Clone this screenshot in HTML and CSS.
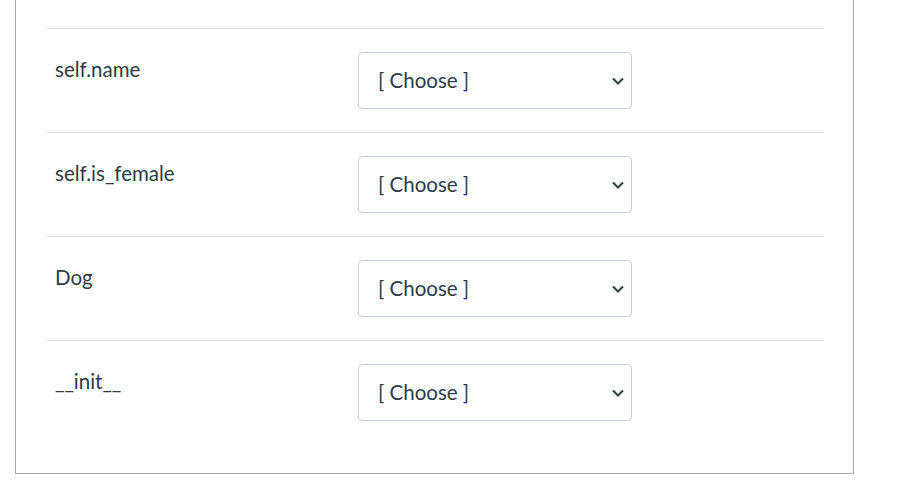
FILE: index.html
```html
<!DOCTYPE html>
<html lang="en">
<head>
  <meta charset="UTF-8">
  <title>Matching question</title>
  <link rel="stylesheet" href="styles.css">
</head>
<body>
  <div class="question">
    <div class="answer">
      <div class="answer-label">self.name</div>
      <div class="select-wrap">
        <select class="choose"><option>[ Choose ]</option></select>
        <svg class="chevron" width="12" height="8" viewBox="0 0 12 8"><path d="M1 1.5 L6 6.5 L11 1.5" fill="none" stroke="#2d3b45" stroke-width="2"/></svg>
      </div>
    </div>
    <div class="answer">
      <div class="answer-label">self.is_female</div>
      <div class="select-wrap">
        <select class="choose"><option>[ Choose ]</option></select>
        <svg class="chevron" width="12" height="8" viewBox="0 0 12 8"><path d="M1 1.5 L6 6.5 L11 1.5" fill="none" stroke="#2d3b45" stroke-width="2"/></svg>
      </div>
    </div>
    <div class="answer">
      <div class="answer-label">Dog</div>
      <div class="select-wrap">
        <select class="choose"><option>[ Choose ]</option></select>
        <svg class="chevron" width="12" height="8" viewBox="0 0 12 8"><path d="M1 1.5 L6 6.5 L11 1.5" fill="none" stroke="#2d3b45" stroke-width="2"/></svg>
      </div>
    </div>
    <div class="answer">
      <div class="answer-label">__init__</div>
      <div class="select-wrap">
        <select class="choose"><option>[ Choose ]</option></select>
        <svg class="chevron" width="12" height="8" viewBox="0 0 12 8"><path d="M1 1.5 L6 6.5 L11 1.5" fill="none" stroke="#2d3b45" stroke-width="2"/></svg>
      </div>
    </div>
  </div>
</body>
</html>
```

FILE: styles.css
```css
body {
  margin: 0;
  padding: 0 0 0 15px;
  font-family: Lato, "Open Sans", sans-serif;
  color: #2d3b45;
  background: #fff;
}
.question {
  width: 777px;
  border: 1px solid #aaaaaa;
  border-top: none;
  padding: 28px 29px 29px 31px;
}
.answer {
  display: flex;
  align-items: flex-start;
  border-top: 1px solid #dcdcdc;
  padding: 23px 0 23px 0;
}
.answer-label {
  width: 303px;
  padding: 3px 0 0 8px;
  font-size: 20.5px;
  line-height: 28px;
}
.select-wrap {
  position: relative;
  width: 274px;
}
.choose {
  appearance: none;
  -webkit-appearance: none;
  width: 274px;
  height: 57px;
  box-sizing: border-box;
  border: 1px solid #c7cdd1;
  border-radius: 4px;
  background: #fff;
  padding: 0 30px 2px 19px;
  font-family: Lato, "Open Sans", sans-serif;
  font-size: 20.5px;
  color: #2d3b45;
  display: block;
}
.chevron {
  position: absolute;
  right: 8px;
  top: 25px;
  pointer-events: none;
}
```
